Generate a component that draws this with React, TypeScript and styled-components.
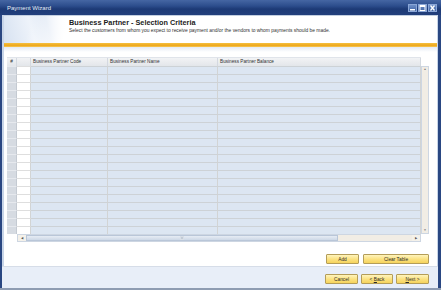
import styled, { createGlobalStyle } from "styled-components";

const Global = createGlobalStyle`
  html, body { margin: 0; padding: 0; background: #ffffff; }
  body { font-family: "Liberation Sans", Arial, sans-serif; }
  * { box-sizing: border-box; }
`;

const columns = [
  { key: "num", label: "#", width: 10, bg: "#d6dbe2" },
  { key: "blank", label: "", width: 14, bg: "#ffffff" },
  { key: "code", label: "Business Partner Code", width: 77, bg: "#dce6f2" },
  { key: "name", label: "Business Partner Name", width: 110, bg: "#dce6f2" },
  { key: "balance", label: "Business Partner Balance", width: 203, bg: "#dce6f2" },
];

const rows = Array.from({ length: 21 }, (_, i) => i);

const App = () => {
  return (
    <>
      <Global />
      <Window>
        <TitleBar>
          <TitleText>Payment Wizard</TitleText>
          <Controls>
            <CtlBtn>
              <svg width="7" height="6" viewBox="0 0 7 6">
                <rect x="1" y="4" width="5" height="1.5" fill="#fff" />
              </svg>
            </CtlBtn>
            <CtlBtn>
              <svg width="7" height="6" viewBox="0 0 7 6">
                <rect x="1" y="0.5" width="5" height="5" fill="none" stroke="#fff" strokeWidth="1" />
                <rect x="1" y="0.5" width="5" height="1.5" fill="#fff" />
              </svg>
            </CtlBtn>
            <CtlBtn>
              <svg width="7" height="6" viewBox="0 0 7 6">
                <path d="M1.5 0.5 L5.5 5.5 M5.5 0.5 L1.5 5.5" stroke="#fff" strokeWidth="1.3" />
              </svg>
            </CtlBtn>
          </Controls>
        </TitleBar>

        <Body>
          <Panel>
            <Header>
              <Swoosh />
              <HeadText>
                <Heading>Business Partner - Selection Criteria</Heading>
                <SubHeading>
                  Select the customers from whom you expect to receive payment and/or the vendors to whom payments should be made.
                </SubHeading>
              </HeadText>
            </Header>
            <OrangeBar />
            <Fade />

            <GridWrap>
              <HeadRow>
                {columns.map((c) => (
                  <HeadCell key={c.key} w={c.width} center={c.key === "num"}>
                    {c.label}
                  </HeadCell>
                ))}
              </HeadRow>
              <GridBody>
                <Rows>
                  {rows.map((r) => (
                    <Row key={r}>
                      {columns.map((c) => (
                        <Cell key={c.key} w={c.width} bg={c.bg} kind={c.key} />
                      ))}
                    </Row>
                  ))}
                </Rows>
                <VScroll>
                  <Arrow>▲</Arrow>
                  <Arrow>▼</Arrow>
                </VScroll>
              </GridBody>
              <HScroll>
                <HArrow>◀</HArrow>
                <Thumb>
                  <Grip />
                </Thumb>
                <Track />
                <HArrow>▶</HArrow>
              </HScroll>
            </GridWrap>

            <ButtonRow>
              <Button w={33}>Add</Button>
              <Button w={66}>Clear Table</Button>
            </ButtonRow>
          </Panel>

          <Footer>
            <Button w={33}>Cancel</Button>
            <Button w={32}>
              <span>
                &lt; <u>B</u>ack
              </span>
            </Button>
            <Button w={33}>
              <span>
                <u>N</u>ext &gt;
              </span>
            </Button>
          </Footer>
        </Body>
      </Window>
    </>
  );
};

export default App;

const Window = styled.div`
  width: 441px;
  height: 290px;
  display: flex;
  flex-direction: column;
  background: #2a4782;
  border-bottom: 2px solid #8e9cb2;
`;

const TitleBar = styled.div`
  height: 15px;
  display: flex;
  align-items: center;
  justify-content: space-between;
  padding: 0 4px 0 7px;
  background: linear-gradient(#4566a3 0%, #2c4d8c 40%, #1d3a76 60%, #223f7c 100%);
`;

const TitleText = styled.span`
  color: #e8eef8;
  font-size: 6px;
  line-height: 6px;
  margin-top: 1px;
`;

const Controls = styled.div`
  display: flex;
  gap: 1px;
  margin-top: 1px;
`;

const CtlBtn = styled.div`
  width: 9px;
  height: 8px;
  display: flex;
  align-items: center;
  justify-content: center;
  background: linear-gradient(#6f90c8, #4165a6);
  border: 1px solid #8aa6d6;
`;

const Body = styled.div`
  flex: 1;
  display: flex;
  flex-direction: column;
  margin: 0 3px 0 2px;
  background: #c8d5e8;
  padding: 0 1px 0 2px;
`;

const Panel = styled.div`
  flex: 1;
  display: flex;
  flex-direction: column;
  background: #ffffff;
  border-top: 1px solid #c3cfe0;
`;

const Header = styled.div`
  height: 27px;
  display: flex;
`;

const Swoosh = styled.div`
  width: 62px;
  background:
    linear-gradient(105deg, rgba(255,255,255,0) 40%, #ffffff 95%),
    linear-gradient(75deg, #d7e2f1 0%, #eef3fa 45%, #dbe5f3 70%, #ffffff 100%);
`;

const HeadText = styled.div`
  display: flex;
  flex-direction: column;
  padding: 3px 0 0 3px;
`;

const Heading = styled.div`
  font-size: 7.3px;
  font-weight: bold;
  color: #1c1c1c;
  line-height: 8px;
`;

const SubHeading = styled.div`
  font-size: 4.9px;
  color: #303030;
  line-height: 6px;
  margin-top: 1px;
  white-space: nowrap;
`;

const OrangeBar = styled.div`
  height: 4px;
  background: linear-gradient(#f4c040, #eea81c 60%, #f6c858);
`;

const Fade = styled.div`
  height: 5px;
  background: linear-gradient(#e3eaf4, #ffffff);
`;

const GridWrap = styled.div`
  margin: 5px 8px 0 3px;
  display: flex;
  flex-direction: column;
`;

const HeadRow = styled.div`
  display: flex;
  height: 9px;
  width: 414px;
  background: linear-gradient(#f2f3f5, #e3e6ea);
  border-top: 1px solid #e0e4ea;
`;

const HeadCell = styled.div<{ w: number; center?: boolean }>`
  width: ${({ w }) => w}px;
  font-size: 4.7px;
  color: #303030;
  line-height: 8px;
  padding-left: ${({ center }) => (center ? 0 : 2)}px;
  text-align: ${({ center }) => (center ? "center" : "left")};
  border-right: 1px solid #d4d9e0;
  white-space: nowrap;
  overflow: hidden;
`;

const GridBody = styled.div`
  display: flex;
`;

const Rows = styled.div`
  width: 414px;
  display: flex;
  flex-direction: column;
`;

const Row = styled.div`
  display: flex;
  height: 8px;
`;

const Cell = styled.div<{ w: number; bg: string; kind: string }>`
  width: ${({ w }) => w}px;
  background: ${({ bg }) => bg};
  border-top: 1px solid ${({ kind }) => (kind === "num" ? "#e6e9ee" : kind === "blank" ? "#dedede" : "#cdd2d6")};
  border-right: 1px solid ${({ kind }) => (kind === "num" ? "#c4cad2" : "#d2d4d4")};
`;

const VScroll = styled.div`
  width: 8px;
  display: flex;
  flex-direction: column;
  justify-content: space-between;
  align-items: center;
  background: #f1ede5;
  border: 1px solid #cdd6e2;
`;

const Arrow = styled.span`
  font-size: 3px;
  line-height: 5px;
  color: #777;
`;

const HScroll = styled.div`
  margin-left: 10px;
  width: 404px;
  height: 8px;
  display: flex;
  align-items: stretch;
  border: 1px solid #cdd6e2;
  background: #f1ede5;
`;

const HArrow = styled.span`
  width: 8px;
  font-size: 3px;
  line-height: 6px;
  color: #555;
  text-align: center;
  background: #f4f1ea;
`;

const Thumb = styled.div`
  width: 312px;
  display: flex;
  align-items: center;
  justify-content: center;
  background: linear-gradient(#e6ecf4, #cdd8e6);
  border: 1px solid #b9c6d8;
`;

const Grip = styled.div`
  width: 4px;
  height: 4px;
  background: #c2cbd6;
  border: 1px solid #d8dee6;
`;

const Track = styled.div`
  flex: 1;
`;

const ButtonRow = styled.div`
  display: flex;
  justify-content: flex-end;
  gap: 4px;
  padding: 12px 8px 0 0;
`;

const Button = styled.div<{ w: number }>`
  width: ${({ w }) => w}px;
  height: 10px;
  display: flex;
  align-items: center;
  justify-content: center;
  font-size: 4.8px;
  color: #2a2a2a;
  white-space: pre;
  background: linear-gradient(#fff4bd, #fbe283 50%, #f6d45c);
  border: 1px solid #b49d58;
  border-radius: 1px;
  u { text-decoration: underline; }
`;

const Footer = styled.div`
  height: 22px;
  display: flex;
  justify-content: flex-end;
  gap: 3px;
  padding: 7px 9px 0 0;
  background: #e8eef8;
  border-top: 1px solid #d6dde8;
  margin: 0 -1px 0 -2px;
`;
